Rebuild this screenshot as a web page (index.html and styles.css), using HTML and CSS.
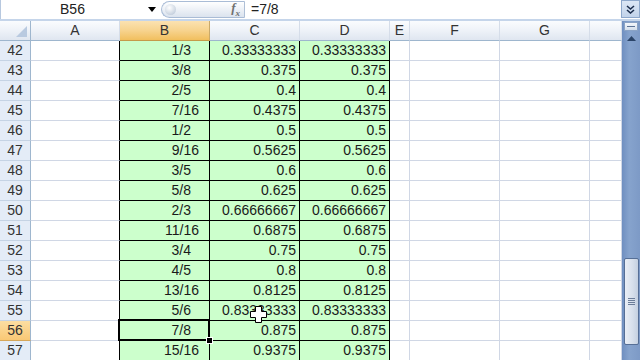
FILE: index.html
```html
<!DOCTYPE html>
<html lang="en">
<head>
    <meta charset="UTF-8">
    <link rel="stylesheet" href="styles.css">
    <title>Book1 - Excel</title>
</head>
<body>
<div class="app">
    <div class="formula-bar">
        <div class="name-box">B56</div>
        <div class="name-drop">
            <svg width="8" height="5" viewBox="0 0 8 5"><path d="M0 0h8L4 5z" fill="#000"/></svg>
        </div>
        <div class="fx-area">
            <span class="grip"></span>
            <span class="fx">f<sub>x</sub></span>
        </div>
        <div class="formula">=7/8</div>
        <div class="expand">
            <svg width="9" height="9" viewBox="0 0 9 9"><path d="M1 1l3.5 3 3.5-3M1 5l3.5 3 3.5-3" fill="none" stroke="#1d2f4d" stroke-width="1.6"/></svg>
        </div>
    </div>
    <div class="band"></div>

    <div class="main">
        <div class="sheet">
            <div class="hd corner"><span class="tri"></span></div>
            <div class="hd">A</div>
            <div class="hd sel">B</div>
            <div class="hd">C</div>
            <div class="hd">D</div>
            <div class="hd">E</div>
            <div class="hd">F</div>
            <div class="hd">G</div>
            <div class="hd"></div>

            <div class="rh">42</div><div class="c ca"></div><div class="c g fr f1">1/3</div><div class="c g">0.33333333</div><div class="c g">0.33333333</div><div class="c"></div><div class="c"></div><div class="c"></div><div class="c"></div>
            <div class="rh">43</div><div class="c ca"></div><div class="c g fr f1">3/8</div><div class="c g">0.375</div><div class="c g">0.375</div><div class="c"></div><div class="c"></div><div class="c"></div><div class="c"></div>
            <div class="rh">44</div><div class="c ca"></div><div class="c g fr f1">2/5</div><div class="c g">0.4</div><div class="c g">0.4</div><div class="c"></div><div class="c"></div><div class="c"></div><div class="c"></div>
            <div class="rh">45</div><div class="c ca"></div><div class="c g fr">7/16</div><div class="c g">0.4375</div><div class="c g">0.4375</div><div class="c"></div><div class="c"></div><div class="c"></div><div class="c"></div>
            <div class="rh">46</div><div class="c ca"></div><div class="c g fr f1">1/2</div><div class="c g">0.5</div><div class="c g">0.5</div><div class="c"></div><div class="c"></div><div class="c"></div><div class="c"></div>
            <div class="rh">47</div><div class="c ca"></div><div class="c g fr">9/16</div><div class="c g">0.5625</div><div class="c g">0.5625</div><div class="c"></div><div class="c"></div><div class="c"></div><div class="c"></div>
            <div class="rh">48</div><div class="c ca"></div><div class="c g fr f1">3/5</div><div class="c g">0.6</div><div class="c g">0.6</div><div class="c"></div><div class="c"></div><div class="c"></div><div class="c"></div>
            <div class="rh">49</div><div class="c ca"></div><div class="c g fr f1">5/8</div><div class="c g">0.625</div><div class="c g">0.625</div><div class="c"></div><div class="c"></div><div class="c"></div><div class="c"></div>
            <div class="rh">50</div><div class="c ca"></div><div class="c g fr f1">2/3</div><div class="c g">0.66666667</div><div class="c g">0.66666667</div><div class="c"></div><div class="c"></div><div class="c"></div><div class="c"></div>
            <div class="rh">51</div><div class="c ca"></div><div class="c g fr">11/16</div><div class="c g">0.6875</div><div class="c g">0.6875</div><div class="c"></div><div class="c"></div><div class="c"></div><div class="c"></div>
            <div class="rh">52</div><div class="c ca"></div><div class="c g fr f1">3/4</div><div class="c g">0.75</div><div class="c g">0.75</div><div class="c"></div><div class="c"></div><div class="c"></div><div class="c"></div>
            <div class="rh">53</div><div class="c ca"></div><div class="c g fr f1">4/5</div><div class="c g">0.8</div><div class="c g">0.8</div><div class="c"></div><div class="c"></div><div class="c"></div><div class="c"></div>
            <div class="rh">54</div><div class="c ca"></div><div class="c g fr">13/16</div><div class="c g">0.8125</div><div class="c g">0.8125</div><div class="c"></div><div class="c"></div><div class="c"></div><div class="c"></div>
            <div class="rh">55</div><div class="c ca"></div><div class="c g fr f1">5/6</div><div class="c g hover">0.83333333
                <svg class="cursor" width="17" height="17" viewBox="0 0 17 17"><path d="M5.5 .5h6v5h5v6h-5v5h-6v-5h-5v-6h5z" fill="#fff" stroke="#000"/></svg>
            </div><div class="c g">0.83333333</div><div class="c"></div><div class="c"></div><div class="c"></div><div class="c"></div>
            <div class="rh sel">56</div><div class="c ca"></div><div class="c g fr f1 active">7/8</div><div class="c g">0.875</div><div class="c g">0.875</div><div class="c"></div><div class="c"></div><div class="c"></div><div class="c"></div>
            <div class="rh">57</div><div class="c ca"></div><div class="c g fr">15/16</div><div class="c g">0.9375</div><div class="c g">0.9375</div><div class="c"></div><div class="c"></div><div class="c"></div><div class="c"></div>
        </div>

        <div class="vscroll">
            <div class="split"><span></span></div>
            <div class="up">
                <svg width="9" height="5" viewBox="0 0 9 5"><path d="M0 5L4.5 0 9 5z" fill="#2b4468"/></svg>
            </div>
            <div class="track-top"></div>
            <div class="thumb"><span></span><span></span><span></span><span></span></div>
            <div class="track-rest"></div>
        </div>
    </div>
</div>
</body>
</html>
```

FILE: styles.css
```css
body {
    margin: 0;
    overflow: hidden;
    font-family: 'Liberation Sans', Arial, sans-serif;
    background-color: #fff;
}

.app {
    width: 640px;
    height: 360px;
    overflow: hidden;
}

/* Formula bar */
.formula-bar {
    display: flex;
    height: 19px;
    background-color: #fff;
    border-left: 1px solid #b7c8df;
    box-sizing: border-box;
}

.name-box {
    width: 143px;
    font-size: 14px;
    line-height: 19px;
    text-align: center;
    color: #222;
}

.name-drop {
    width: 17px;
    display: flex;
    align-items: center;
    padding-left: 4px;
    box-sizing: border-box;
}

.fx-area {
    width: 84px;
    height: 17px;
    margin-top: 1px;
    display: flex;
    align-items: center;
    justify-content: space-between;
    box-sizing: border-box;
    border: 1px solid #a9bcd6;
    border-right: 1px solid #aebfd6;
    border-radius: 9px 0 0 9px;
    background: linear-gradient(#ffffff, #e9eef5 60%, #dbe3ee);
    padding: 0 4px 0 3px;
}

.grip {
    width: 11px;
    height: 11px;
    border-radius: 50%;
    background: radial-gradient(circle at 40% 35%, #ffffff, #c9d3e0 70%, #a8b6c9);
}

.fx {
    font-family: 'Liberation Serif', 'Times New Roman', serif;
    font-style: italic;
    font-weight: bold;
    font-size: 13px;
    color: #707070;
    margin-top: -2px;
}

.fx sub {
    font-size: 9px;
}

.formula {
    flex: 1;
    font-size: 14px;
    line-height: 19px;
    padding-left: 6px;
    color: #222;
}

.expand {
    width: 19px;
    height: 18px;
    box-sizing: border-box;
    display: flex;
    align-items: center;
    justify-content: center;
    background: linear-gradient(#dce7f5, #c2d3ea);
    border: 1px solid #8ea8cb;
}

.band {
    height: 2px;
    background-color: #c5d5ea;
}

/* Sheet */
.main {
    display: flex;
    height: 339px;
}

.sheet {
    display: grid;
    grid-template-columns: 31px 89px 90px 90px 90px 20px 90px 90px 32px;
    grid-auto-rows: 20px;
    width: 622px;
    font-size: 14px;
}

.hd {
    box-sizing: border-box;
    border-right: 1px solid #d5dde9;
    border-bottom: 1px solid #9eb6ce;
    background: linear-gradient(#fafcfe, #eef2f8 50%, #dfe6f0);
    text-align: center;
    line-height: 19px;
    color: #333;
}

.hd.sel {
    background: linear-gradient(#fbe2b1, #f7d38e 50%, #f1bf5e);
    border-right-color: #c9a96a;
    border-bottom-color: #c59a4a;
}

.corner {
    position: relative;
    border-right-color: #9eb6ce;
}

.tri {
    position: absolute;
    right: 3px;
    bottom: 3px;
    width: 0;
    height: 0;
    border-left: 11px solid transparent;
    border-bottom: 11px solid #b9cae0;
}

.rh {
    box-sizing: border-box;
    border-right: 1px solid #9eb6ce;
    border-bottom: 1px solid #c5d3e4;
    background-color: #e4ecf7;
    text-align: center;
    line-height: 19px;
    color: #333;
}

.rh.sel {
    background: linear-gradient(#fcdea2, #f9c875);
    border-bottom-color: #d6a75a;
}

.c {
    box-sizing: border-box;
    border-right: 1px solid #d0d7e5;
    border-bottom: 1px solid #d0d7e5;
    text-align: right;
    line-height: 19px;
    padding-right: 3px;
    white-space: nowrap;
    overflow: hidden;
    color: #1a1a1a;
}

.c.ca {
    border-right-color: #000;
}

.c.g {
    background-color: #ccffcc;
    border-right-color: #000;
    border-bottom-color: #000;
}

.c.fr {
    padding-right: 10px;
}

.c.fr.f1 {
    padding-right: 18px;
}

.hover {
    position: relative;
    overflow: visible;
}

.cursor {
    position: absolute;
    left: 40px;
    top: 5px;
}

.active {
    position: relative;
    overflow: visible;
}

.active::before {
    content: "";
    position: absolute;
    left: -2px;
    top: -2px;
    right: -1px;
    bottom: -1px;
    border: 2px solid #000;
}

.active::after {
    content: "";
    position: absolute;
    right: -4px;
    bottom: -4px;
    width: 5px;
    height: 5px;
    background-color: #000;
    border: 1px solid #fff;
}

/* Vertical scrollbar */
.vscroll {
    width: 18px;
    display: flex;
    flex-direction: column;
    background: linear-gradient(90deg, #6f8fc0, #86a3cd 40%, #7d9ac6);
}

.split {
    height: 7px;
    margin: 1px 2px 0;
    background: linear-gradient(#f4f7fb, #d3deec);
    border: 1px solid #8aa3c6;
    display: flex;
    align-items: center;
    justify-content: center;
}

.split span {
    width: 8px;
    height: 1px;
    background-color: #5c7396;
}

.up {
    height: 14px;
    display: flex;
    align-items: center;
    justify-content: center;
}

.track-top {
    height: 213px;
}

.thumb {
    height: 87px;
    margin: 0 1px 0 2px;
    box-sizing: border-box;
    border: 1px solid #566f96;
    border-radius: 2px;
    background: linear-gradient(90deg, #e9eef6, #d6dfeb 60%, #c4d0e0);
    display: flex;
    flex-direction: column;
    align-items: center;
    justify-content: center;
    gap: 1px;
}

.thumb span {
    width: 7px;
    height: 1px;
    background-color: #6b7d99;
}

.track-rest {
    flex: 1;
}
```
